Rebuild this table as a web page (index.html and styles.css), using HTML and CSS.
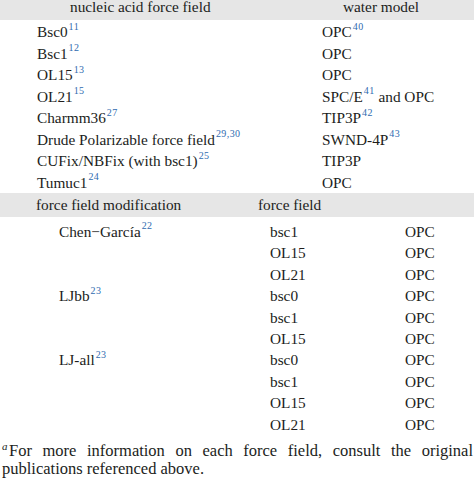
FILE: index.html
```html
<!DOCTYPE html>
<html>
<head>
<meta charset="utf-8">
<link rel="stylesheet" href="styles.css">
</head>
<body>
<div class="page">
  <div class="hd hd1">
    <span class="h1a">nucleic acid force field</span>
    <span class="h1b">water model</span>
  </div>
  <div class="rows1">
    <div class="r1"><span class="d1">Bsc0<sup>11</sup></span><span>OPC<sup>40</sup></span></div>
    <div class="r1"><span class="d1">Bsc1<sup>12</sup></span><span>OPC</span></div>
    <div class="r1"><span class="d1">OL15<sup>13</sup></span><span>OPC</span></div>
    <div class="r1"><span class="d1">OL21<sup>15</sup></span><span>SPC/E<sup>41</sup> and OPC</span></div>
    <div class="r1"><span class="d1">Charmm36<sup>27</sup></span><span>TIP3P<sup>42</sup></span></div>
    <div class="r1"><span class="d1">Drude Polarizable force field<sup>29,30</sup></span><span>SWND-4P<sup>43</sup></span></div>
    <div class="r1"><span class="d1">CUFix/NBFix (with bsc1)<sup>25</sup></span><span>TIP3P</span></div>
    <div class="r1"><span class="d1">Tumuc1<sup>24</sup></span><span>OPC</span></div>
  </div>
  <div class="hd hd2">
    <span class="h2a">force field modification</span>
    <span>force field</span>
    <span></span>
  </div>
  <div class="rows2">
    <div class="r2"><span class="e1">Chen−García<sup>22</sup></span><span class="e2">bsc1</span><span>OPC</span></div>
    <div class="r2"><span class="e1"></span><span class="e2">OL15</span><span>OPC</span></div>
    <div class="r2"><span class="e1"></span><span class="e2">OL21</span><span>OPC</span></div>
    <div class="r2"><span class="e1">LJbb<sup>23</sup></span><span class="e2">bsc0</span><span>OPC</span></div>
    <div class="r2"><span class="e1"></span><span class="e2">bsc1</span><span>OPC</span></div>
    <div class="r2"><span class="e1"></span><span class="e2">OL15</span><span>OPC</span></div>
    <div class="r2"><span class="e1">LJ-all<sup>23</sup></span><span class="e2">bsc0</span><span>OPC</span></div>
    <div class="r2"><span class="e1"></span><span class="e2">bsc1</span><span>OPC</span></div>
    <div class="r2"><span class="e1"></span><span class="e2">OL15</span><span>OPC</span></div>
    <div class="r2"><span class="e1"></span><span class="e2">OL21</span><span>OPC</span></div>
  </div>
  <p class="fn"><sup class="fa">a</sup>For more information on each force field, consult the original publications referenced above.</p>
</div>
</body>
</html>
```

FILE: styles.css
```css
html, body {
  margin: 0;
  padding: 0;
  background: #ffffff;
}

.page {
  width: 474px;
  font-family: "Liberation Serif", "Times New Roman", serif;
  font-size: 15.3px;
  color: #211d1b;
  overflow: hidden;
}

.hd {
  background: #e6e6e6;
  white-space: nowrap;
}

.hd1 {
  display: grid;
  grid-template-columns: 322px 1fr;
  height: 20px;
  line-height: 14.6px;
}

.h1a {
  padding-left: 70px;
}

.h1b {
  padding-left: 21px;
}

.rows1 {
  padding-top: 1.15px;
}

.r1 {
  display: grid;
  grid-template-columns: 322px 1fr;
  height: 21.5px;
  line-height: 21.5px;
  white-space: nowrap;
}

.d1 {
  padding-left: 37px;
}

.hd2 {
  display: grid;
  grid-template-columns: 258px 147px 1fr;
  height: 24px;
  line-height: 24px;
}

.h2a {
  padding-left: 36px;
}

.rows2 {
  padding-top: 3.7px;
}

.r2 {
  display: grid;
  grid-template-columns: 258px 147px 1fr;
  height: 21.45px;
  line-height: 21.45px;
  white-space: nowrap;
}

.e1 {
  padding-left: 59px;
}

.e2 {
  padding-left: 12px;
}

sup {
  font-size: 10px;
  line-height: 0;
  vertical-align: 7.5px;
  color: #2f6bb0;
  letter-spacing: 0.4px;
  padding-left: 1px;
}

.fn {
  margin: 6.5px 0 0 0;
  padding: 0 1px 0 2px;
  font-size: 16.5px;
  line-height: 18.5px;
  text-align: justify;
  text-align-last: left;
}

.fn .fa {
  font-style: italic;
  color: #211d1b;
  font-size: 11px;
  padding-left: 0;
  padding-right: 1.5px;
  letter-spacing: 0;
  vertical-align: 6px;
}
```
